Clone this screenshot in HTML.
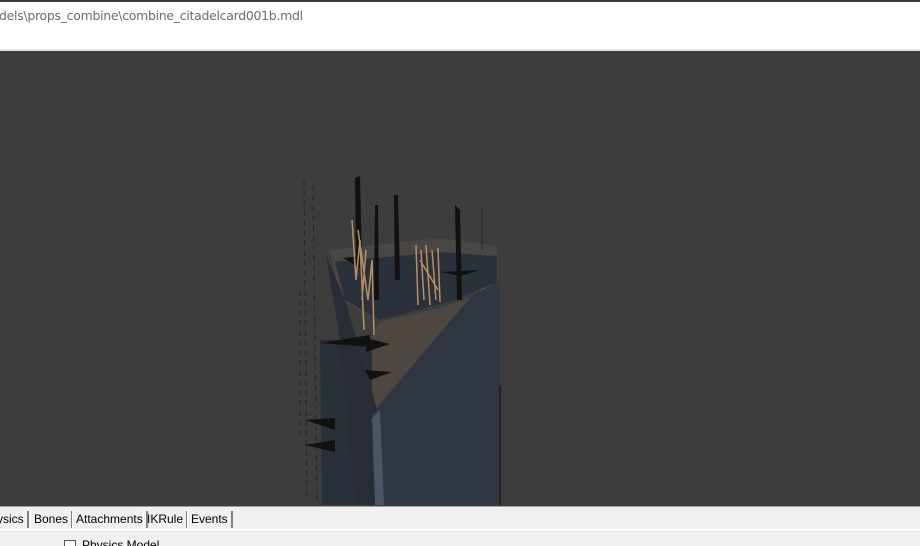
<!DOCTYPE html>
<html><head><style>
html,body{margin:0;width:920px;height:546px;overflow:hidden}
body{background:#3d3d3d;font-family:"Liberation Sans",sans-serif;position:relative}
#top{position:absolute;left:0;top:0;width:920px;height:49px;background:#fff;border-top:2px solid #3a3a3a;box-sizing:border-box}
#top span{position:absolute;left:-1px;top:6px;font-size:12.5px;color:#6d6d6d;font-family:"DejaVu Sans",sans-serif;letter-spacing:-0.3px}
#sep{position:absolute;left:0;top:49px;width:920px;height:2px;background:#e3e3e3}
#vp{position:absolute;left:0;top:51px;width:920px;height:455px;background:#3d3d3d}
#bot{position:absolute;left:0;top:506px;width:920px;height:40px;background:#f0f0f0;border-top:1px solid #a0a0a0;box-sizing:border-box}
.tab{position:absolute;top:4px;height:17px;font-size:12px;color:#000;border-right:2px solid #808080;border-left:1px solid #fff;padding:0 3px;line-height:17px}
#tline{position:absolute;left:0;top:22px;width:920px;height:1px;background:#fff}
#cb{position:absolute;left:64px;top:33px;width:10px;height:10px;border:1px solid #555;background:#fff}
#cbl{position:absolute;left:82px;top:31px;font-size:12px}
</style></head><body>
<div id="top"><span>dels\props_combine\combine_citadelcard001b.mdl</span></div>
<div id="sep"></div>
<div id="vp">
<svg width="920" height="455" viewBox="0 51 920 455" style="position:absolute;left:0;top:0">
<g stroke="#262626" stroke-width="1" stroke-dasharray="6,4">
<line x1="304" y1="180" x2="307" y2="500"/><line x1="313" y1="185" x2="317" y2="500"/><line x1="300" y1="290" x2="300" y2="440"/>
</g>
<polygon points="330,250 440,238 497,246 498,285 380,320 340,300" fill="#4a4644"/>
<polygon points="335,262 440,252 497,256 497,282 455,300 380,320 345,300" fill="#2b313b"/>
<polygon points="380,322 440,308 470,298 372,412 370,340" fill="#4e4640"/>
<polygon points="320,340 372,340 372,505 322,505" fill="#2a303a"/>
<polygon points="326,255 345,300 380,420 376,505 355,505 340,340" fill="#272c35"/>
<polygon points="372,415 470,298 500,280 500,505 376,505" fill="#2f3541"/>
<polygon points="372,418 380,410 384,505 375,505" fill="#4e5461"/>
<g fill="#111">
<polygon points="355,178 360,176 362,260 356,260"/><polygon points="375,205 378,205 379,300 374,300"/>
<polygon points="394,195 398,195 400,280 395,280"/><polygon points="455,205 460,210 462,300 457,300"/>
<polygon points="440,272 480,270 460,276"/><polygon points="320,343 370,335 370,347"/>
<polygon points="305,420 335,418 335,430"/><polygon points="305,445 335,440 335,452"/>
<polygon points="366,338 366,352 390,344"/><polygon points="343,258 360,256 360,268"/>
<polygon points="365,370 392,372 370,380"/>
</g>
<g stroke="#b89060" stroke-width="1.5" fill="none">
<path d="M352,220 L356,280 L360,240 L364,330 M358,230 L368,300 L372,260 L374,335 M366,250 L362,300"/>
<path d="M416,245 L418,305 M421,250 L424,300 M426,245 L430,305 M432,250 L436,300 M438,248 L440,302 M420,260 L438,290"/>
</g>
<line x1="500" y1="385" x2="500" y2="505" stroke="#222" stroke-width="2"/>
<line x1="482" y1="208" x2="482" y2="250" stroke="#222"/>
</svg>
</div>
<div id="bot">
<div class="tab" style="left:-7px">ysics</div>
<div class="tab" style="left:30px">Bones</div>
<div class="tab" style="left:72px">Attachments</div>
<div class="tab" style="left:143px">IKRule</div>
<div class="tab" style="left:187px">Events</div>
<div id="tline"></div>
<div id="cb"></div><div id="cbl">Physics Model</div>
</div>
</body></html>
